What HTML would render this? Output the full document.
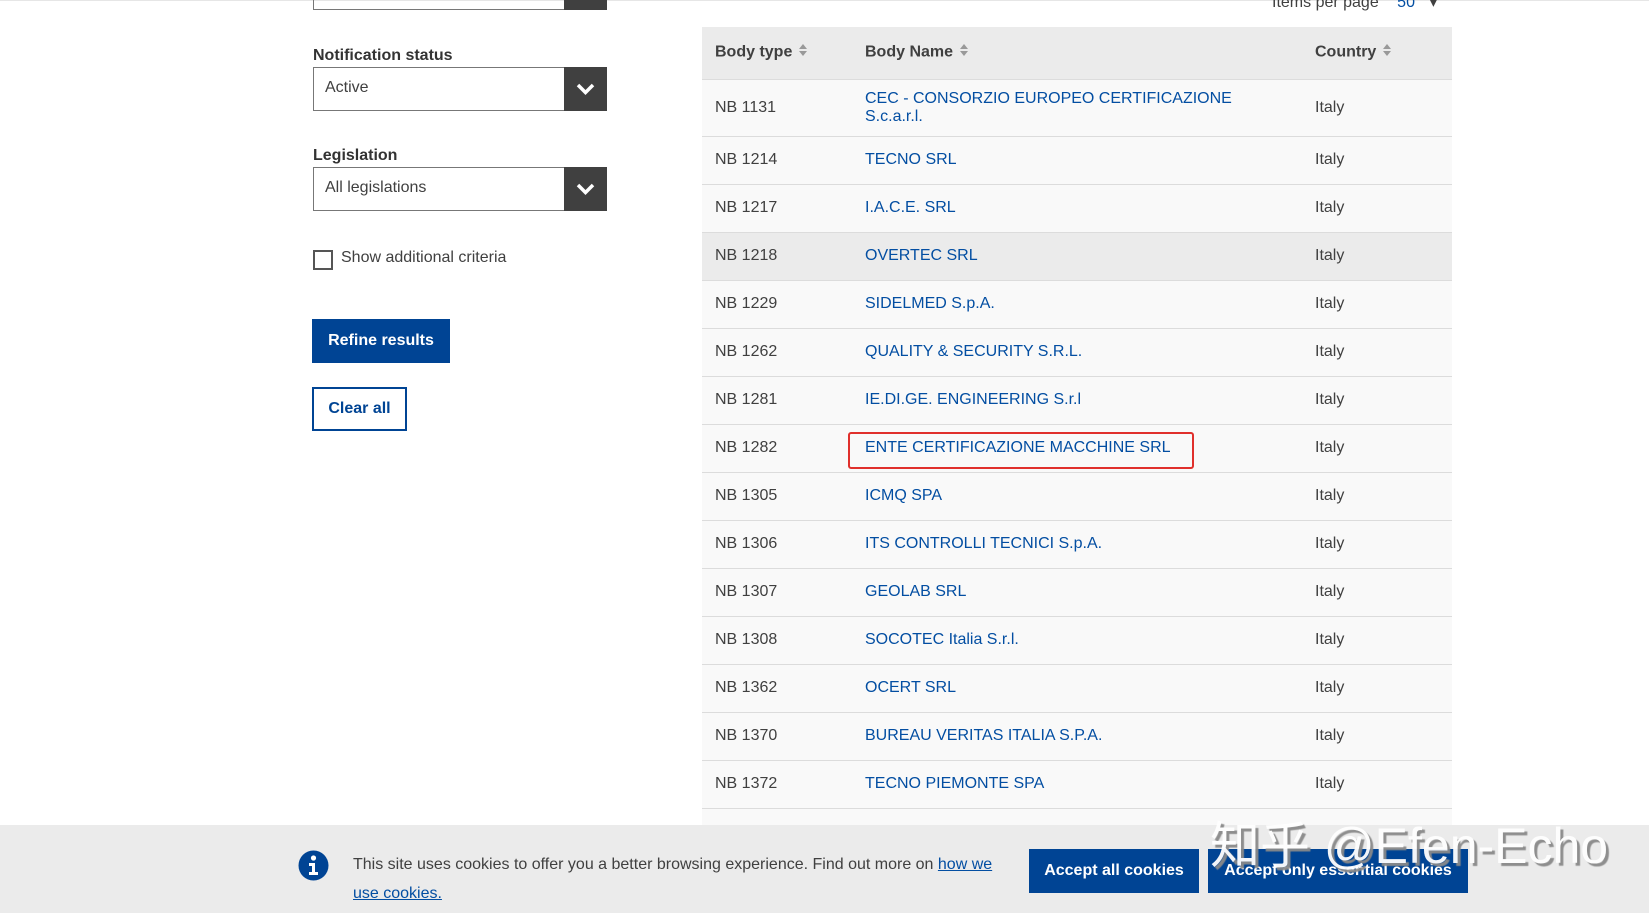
<!DOCTYPE html>
<html><head><meta charset="utf-8"><style>
*{box-sizing:border-box;margin:0;padding:0}
body{width:1649px;height:913px;overflow:hidden;background:#fff;font-family:"Liberation Sans",Arial,sans-serif;color:#404040;position:relative}
.abs{position:absolute}
.lbl{font-weight:bold;font-size:16px;color:#333}
.sel{position:absolute;left:313px;width:294px;height:44px;border:1px solid #777;background:#fff;font-size:16px;color:#404040;padding:11px 11px}
.sel .ar{position:absolute;right:-1px;top:-1px;width:43px;height:44px;background:#404040}
.sel .ar svg{position:absolute;left:12px;top:13px}
table{position:absolute;left:702px;top:27px;width:750px;border-collapse:collapse;font-size:16px}
th{background:#ebebeb;height:52px;text-align:left;font-weight:bold;color:#404040;padding-left:13px}
td{height:48px;border-top:1px solid #dcdcdc;padding-left:13px;color:#404040;background:#f9f9f9}
td a{color:#034ea2;text-decoration:none}
tr.dk td{background:#ebebeb}
.srt{display:inline-block;margin-left:6px;vertical-align:middle}
.btn{position:absolute;background:#004494;color:#fff;font-weight:bold;font-size:16px;text-align:center}
</style></head><body>
<div class="abs" style="left:0;top:0;width:1649px;height:1px;background:#e6e6e6"></div>
<div class="abs" style="left:313px;top:-34px;width:294px;height:44px;border:1px solid #777"><div style="position:absolute;right:-1px;top:-1px;width:43px;height:44px;background:#404040"></div></div>
<div class="abs" style="left:1272px;top:-8px;font-size:16px;color:#404040">Items per page <span style="color:#034ea2;margin-left:14px">50</span> <span style="margin-left:10px">▾</span></div>

<div class="abs lbl" style="left:313px;top:47px">Notification status</div>
<div class="sel" style="top:67px">Active<div class="ar"><svg width="19" height="17" viewBox="0 0 19 17"><path d="M2 5l7.5 7.5L17 5" stroke="#fff" stroke-width="3.5" fill="none"/></svg></div></div>
<div class="abs lbl" style="left:313px;top:147px">Legislation</div>
<div class="sel" style="top:167px">All legislations<div class="ar"><svg width="19" height="17" viewBox="0 0 19 17"><path d="M2 5l7.5 7.5L17 5" stroke="#fff" stroke-width="3.5" fill="none"/></svg></div></div>
<div class="abs" style="left:313px;top:250px;width:20px;height:20px;border:2px solid #555;background:#fff"></div>
<div class="abs" style="left:341px;top:249px;font-size:16px;color:#404040">Show additional criteria</div>
<div class="btn" style="left:312px;top:319px;width:138px;height:44px;line-height:44px">Refine results</div>
<div class="abs" style="left:312px;top:387px;width:95px;height:44px;border:2px solid #004494;color:#004494;font-weight:bold;font-size:16px;text-align:center;line-height:40px">Clear all</div>

<table>
<tr><th style="width:150px">Body type<span class="srt"><svg width="10" height="14"><path d="M5 1l4 5H1z M5 13l4-5H1z" fill="#999"/></svg></span></th><th style="width:450px">Body Name<span class="srt"><svg width="10" height="14"><path d="M5 1l4 5H1z M5 13l4-5H1z" fill="#999"/></svg></span></th><th>Country<span class="srt"><svg width="10" height="14"><path d="M5 1l4 5H1z M5 13l4-5H1z" fill="#999"/></svg></span></th></tr>
<tr><td style="height:57px">NB 1131</td><td><a>CEC - CONSORZIO EUROPEO CERTIFICAZIONE<br>S.c.a.r.l.</a></td><td>Italy</td></tr>
<tr><td>NB 1214</td><td><a>TECNO SRL</a></td><td>Italy</td></tr>
<tr><td>NB 1217</td><td><a>I.A.C.E. SRL</a></td><td>Italy</td></tr>
<tr class="dk"><td>NB 1218</td><td><a>OVERTEC SRL</a></td><td>Italy</td></tr>
<tr><td>NB 1229</td><td><a>SIDELMED S.p.A.</a></td><td>Italy</td></tr>
<tr><td>NB 1262</td><td><a>QUALITY &amp; SECURITY S.R.L.</a></td><td>Italy</td></tr>
<tr><td>NB 1281</td><td><a>IE.DI.GE. ENGINEERING S.r.l</a></td><td>Italy</td></tr>
<tr><td>NB 1282</td><td><a>ENTE CERTIFICAZIONE MACCHINE SRL</a></td><td>Italy</td></tr>
<tr><td>NB 1305</td><td><a>ICMQ SPA</a></td><td>Italy</td></tr>
<tr><td>NB 1306</td><td><a>ITS CONTROLLI TECNICI S.p.A.</a></td><td>Italy</td></tr>
<tr><td>NB 1307</td><td><a>GEOLAB SRL</a></td><td>Italy</td></tr>
<tr><td>NB 1308</td><td><a>SOCOTEC Italia S.r.l.</a></td><td>Italy</td></tr>
<tr><td>NB 1362</td><td><a>OCERT SRL</a></td><td>Italy</td></tr>
<tr><td>NB 1370</td><td><a>BUREAU VERITAS ITALIA S.P.A.</a></td><td>Italy</td></tr>
<tr><td>NB 1372</td><td><a>TECNO PIEMONTE SPA</a></td><td>Italy</td></tr>
<tr><td>&nbsp;</td><td></td><td></td></tr>
</table>
<div class="abs" style="left:848px;top:432px;width:346px;height:37px;border:2px solid #e0302c;border-radius:3px"></div>

<div class="abs" style="left:0;top:825px;width:1649px;height:88px;background:#ebebeb"></div>
<svg class="abs" style="left:298px;top:850px" width="31" height="31" viewBox="0 0 31 31"><circle cx="15.5" cy="15.5" r="15" fill="#004494"/><circle cx="15.5" cy="8" r="2.6" fill="#fff"/><path d="M11 13h6v9h3v3h-9v-3h3v-6h-3z" fill="#fff"/></svg>
<div class="abs" style="left:353px;top:850px;font-size:16px;color:#404040;line-height:29px;width:650px">This site uses cookies to offer you a better browsing experience. Find out more on <span style="color:#034ea2;text-decoration:underline">how we use cookies.</span></div>
<div class="btn" style="left:1029px;top:849px;width:170px;height:44px;line-height:44px">Accept all cookies</div>
<div class="btn" style="left:1208px;top:849px;width:260px;height:44px;line-height:44px">Accept only essential cookies</div>
<div class="abs" style="left:1210px;top:806px;font-size:50px;color:#fff;text-shadow:3px 3px 1px #8a8a8a;font-family:'Liberation Sans','Noto Sans CJK SC',sans-serif;white-space:nowrap;opacity:.95">知乎 @Efen-Echo</div>
</body></html>
